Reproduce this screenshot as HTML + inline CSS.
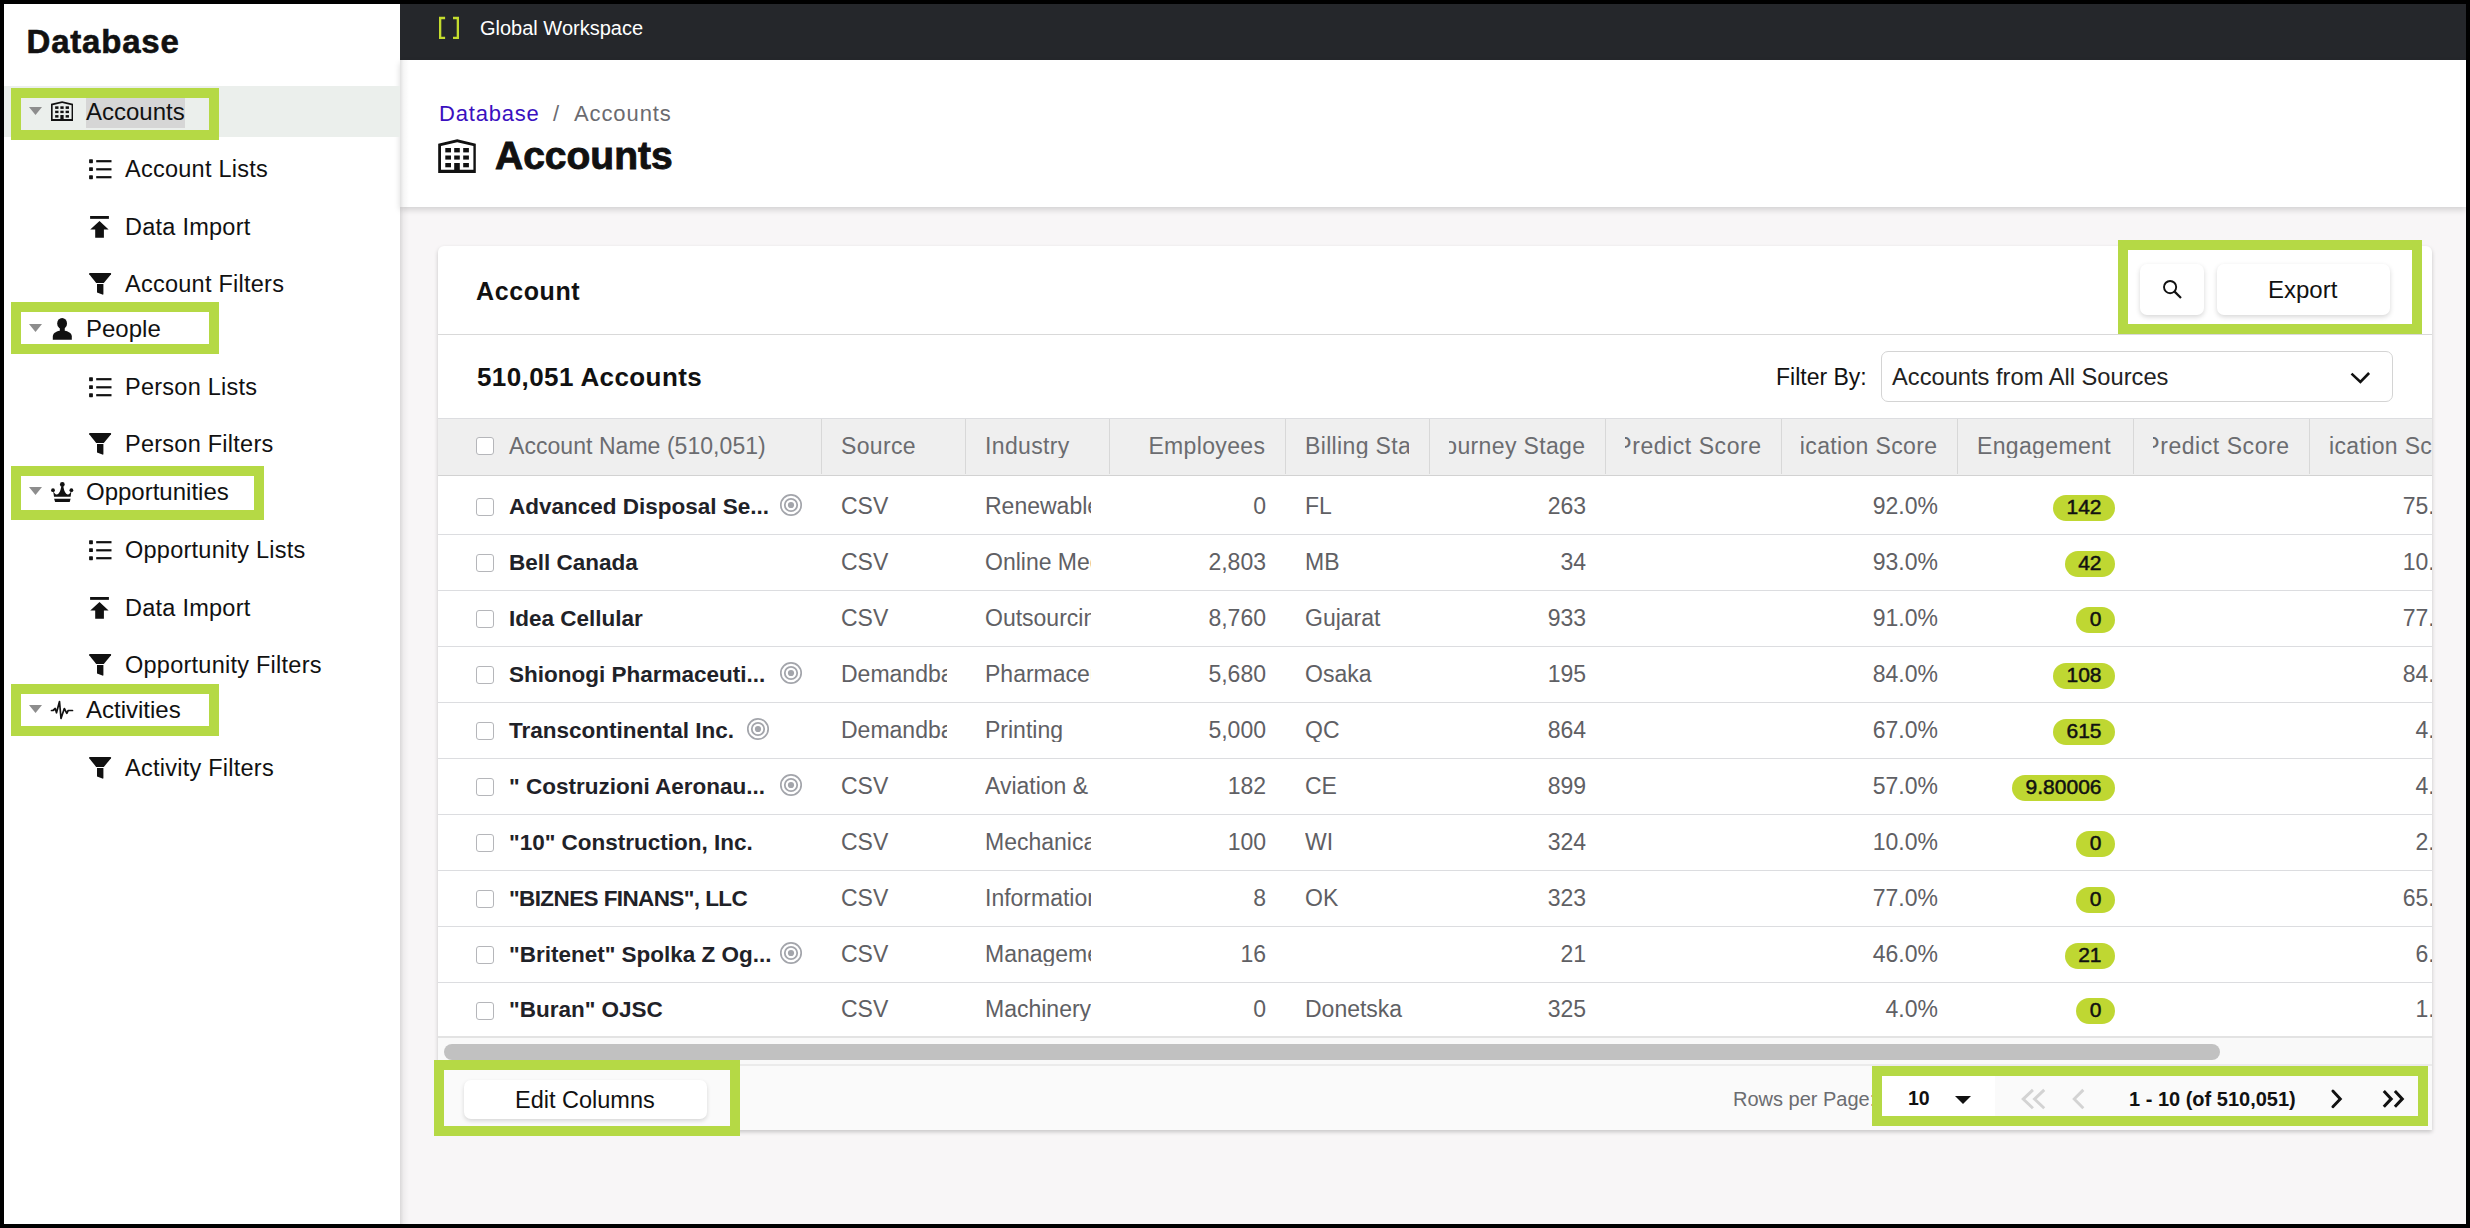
<!DOCTYPE html>
<html><head><meta charset="utf-8">
<style>
*{box-sizing:border-box;margin:0;padding:0}
html,body{width:2470px;height:1228px;overflow:hidden;background:#000;font-family:'Liberation Sans',sans-serif;color:#111}
.a{position:absolute}
.t{position:absolute;white-space:nowrap;line-height:1}
.g{border:10px solid #b5d945;z-index:50}
svg.a{overflow:visible}
</style></head><body>
<div class="a" style="left:4px;top:4px;width:2462px;height:1220px;background:#f8f6f7"></div>
<div class="a" style="left:4px;top:4px;width:396px;height:1220px;background:#fff"></div>
<div class="a" style="left:400px;top:4px;width:2066px;height:56px;background:#25272b"></div>
<div class="a" style="left:400px;top:60px;width:2066px;height:147px;background:#fff;box-shadow:0 3px 6px rgba(0,0,0,.15)"></div>
<div class="a" style="left:400px;top:60px;width:9px;height:1164px;background:linear-gradient(to right,rgba(0,0,0,.12),rgba(0,0,0,.04) 40%,rgba(0,0,0,0))"></div>
<div class="t" style="left:26.5px;top:24.75px;font-size:33px;font-weight:bold;letter-spacing:0.8px;color:#111;-webkit-text-stroke:0.6px #111">Database</div>
<div class="a" style="left:4px;top:86px;width:396px;height:51px;background:#ebefec"></div>
<svg class="a" style="left:29px;top:107px;" width="13" height="8" viewBox="0 0 13 8"><path d="M0 0 H13 L6.5 8 Z" fill="#8d8d8d"/></svg>
<svg class="a" style="left:51px;top:101px;" width="22" height="20" viewBox="0 0 37.6 34"><path fill="#111" fill-rule="evenodd" d="M0 4.7 L19 0.3 L37.6 4.7 V33.9 H0 Z M2.8 7 L19 3.2 L35.2 7 V30.8 H21.6 V24 H16 V30.8 H2.8 Z"/><g fill="#111"><rect x="7.1" y="9" width="5.7" height="4.4"/><rect x="16" y="9" width="5.6" height="4.4"/><rect x="25" y="9" width="5.7" height="4.4"/><rect x="7.1" y="16.5" width="5.7" height="4.1"/><rect x="16" y="16.5" width="5.6" height="4.1"/><rect x="25" y="16.5" width="5.7" height="4.1"/><rect x="7.1" y="24" width="5.7" height="4.3"/><rect x="25" y="24" width="5.7" height="4.3"/></g></svg>
<div class="a" style="left:86px;top:98px;width:99px;height:30px;background:#d6d6d6"></div>
<div class="t" style="left:86px;top:99.60px;font-size:24px;color:#111">Accounts</div>
<svg class="a" style="left:84px;top:154px;" width="32" height="30" viewBox="0 0 32 30"><g fill="#111"><rect x="5.1" y="5.3" width="3.8" height="3.9" rx=".6"/><rect x="5.1" y="13.2" width="3.8" height="3.9" rx=".6"/><rect x="5.1" y="21.3" width="3.8" height="3.9" rx=".6"/><rect x="12.2" y="6.1" width="15.3" height="2.2"/><rect x="12.2" y="14.2" width="15.3" height="2.2"/><rect x="12.2" y="22.1" width="15.3" height="2.2"/></g></svg>
<div class="t" style="left:125px;top:157.83px;font-size:23.5px;color:#111;letter-spacing:0.25px">Account Lists</div>
<svg class="a" style="left:84px;top:210px;" width="32" height="32" viewBox="0 0 32 32"><g fill="#111"><rect x="6.1" y="6" width="18.8" height="2.85"/><path d="M15.5 11.07 L24.6 19.5 H19.9 V27.7 H11.2 V19.5 H6.25 Z"/></g></svg>
<div class="t" style="left:125px;top:215.83px;font-size:23.5px;color:#111;letter-spacing:0.25px">Data Import</div>
<svg class="a" style="left:84px;top:268px;" width="32" height="32" viewBox="0 0 32 32"><g fill="#111"><path d="M6 5.08 H26.4 Q27.6 5.08 27 6.2 L19.8 15 H12.2 L5.2 6.2 Q4.6 5.08 6 5.08 Z"/><path d="M13 16 H19.4 V26 Q19.4 27 18.4 26.6 L13 24.5 Z"/></g></svg>
<div class="t" style="left:125px;top:272.82px;font-size:23.5px;color:#111;letter-spacing:0.25px">Account Filters</div>
<svg class="a" style="left:29px;top:324px;" width="13" height="8" viewBox="0 0 13 8"><path d="M0 0 H13 L6.5 8 Z" fill="#8d8d8d"/></svg>
<svg class="a" style="left:46px;top:312px;" width="32" height="32" viewBox="0 0 32 32"><g fill="#111"><ellipse cx="16.1" cy="11.4" rx="4.9" ry="5.5"/><rect x="13.8" y="15" width="4.95" height="5"/><path d="M6.8 27.7 V24.5 C6.8 21.5 9.5 19.6 13.8 18.75 H18.75 C23 19.6 25.8 21.5 25.8 24.5 V27.7 Z"/></g></svg>
<div class="t" style="left:86px;top:316.60px;font-size:24px;color:#111">People</div>
<svg class="a" style="left:84px;top:372px;" width="32" height="30" viewBox="0 0 32 30"><g fill="#111"><rect x="5.1" y="5.3" width="3.8" height="3.9" rx=".6"/><rect x="5.1" y="13.2" width="3.8" height="3.9" rx=".6"/><rect x="5.1" y="21.3" width="3.8" height="3.9" rx=".6"/><rect x="12.2" y="6.1" width="15.3" height="2.2"/><rect x="12.2" y="14.2" width="15.3" height="2.2"/><rect x="12.2" y="22.1" width="15.3" height="2.2"/></g></svg>
<div class="t" style="left:125px;top:375.82px;font-size:23.5px;color:#111;letter-spacing:0.25px">Person Lists</div>
<svg class="a" style="left:84px;top:428px;" width="32" height="32" viewBox="0 0 32 32"><g fill="#111"><path d="M6 5.08 H26.4 Q27.6 5.08 27 6.2 L19.8 15 H12.2 L5.2 6.2 Q4.6 5.08 6 5.08 Z"/><path d="M13 16 H19.4 V26 Q19.4 27 18.4 26.6 L13 24.5 Z"/></g></svg>
<div class="t" style="left:125px;top:432.82px;font-size:23.5px;color:#111;letter-spacing:0.25px">Person Filters</div>
<svg class="a" style="left:29px;top:487px;" width="13" height="8" viewBox="0 0 13 8"><path d="M0 0 H13 L6.5 8 Z" fill="#8d8d8d"/></svg>
<svg class="a" style="left:46px;top:476px;" width="32" height="32" viewBox="0 0 32 32"><g fill="#111"><circle cx="16.3" cy="8.4" r="2.4"/><circle cx="7" cy="14.2" r="1.9"/><circle cx="25.4" cy="14.2" r="1.9"/><path d="M7 14 L8 20.8 H24.6 L25.6 14 Q24 18.6 21.6 18.4 Q18.6 18 17.2 10 H15.4 Q14 18 11 18.4 Q8.4 18.6 7 14 Z"/><path d="M8.1 22.7 H24.6 L23.7 26 H9.1 Z"/></g></svg>
<div class="t" style="left:86px;top:479.60px;font-size:24px;color:#111">Opportunities</div>
<svg class="a" style="left:84px;top:535px;" width="32" height="30" viewBox="0 0 32 30"><g fill="#111"><rect x="5.1" y="5.3" width="3.8" height="3.9" rx=".6"/><rect x="5.1" y="13.2" width="3.8" height="3.9" rx=".6"/><rect x="5.1" y="21.3" width="3.8" height="3.9" rx=".6"/><rect x="12.2" y="6.1" width="15.3" height="2.2"/><rect x="12.2" y="14.2" width="15.3" height="2.2"/><rect x="12.2" y="22.1" width="15.3" height="2.2"/></g></svg>
<div class="t" style="left:125px;top:538.82px;font-size:23.5px;color:#111;letter-spacing:0.25px">Opportunity Lists</div>
<svg class="a" style="left:84px;top:591px;" width="32" height="32" viewBox="0 0 32 32"><g fill="#111"><rect x="6.1" y="6" width="18.8" height="2.85"/><path d="M15.5 11.07 L24.6 19.5 H19.9 V27.7 H11.2 V19.5 H6.25 Z"/></g></svg>
<div class="t" style="left:125px;top:596.82px;font-size:23.5px;color:#111;letter-spacing:0.25px">Data Import</div>
<svg class="a" style="left:84px;top:649px;" width="32" height="32" viewBox="0 0 32 32"><g fill="#111"><path d="M6 5.08 H26.4 Q27.6 5.08 27 6.2 L19.8 15 H12.2 L5.2 6.2 Q4.6 5.08 6 5.08 Z"/><path d="M13 16 H19.4 V26 Q19.4 27 18.4 26.6 L13 24.5 Z"/></g></svg>
<div class="t" style="left:125px;top:653.82px;font-size:23.5px;color:#111;letter-spacing:0.25px">Opportunity Filters</div>
<svg class="a" style="left:29px;top:705px;" width="13" height="8" viewBox="0 0 13 8"><path d="M0 0 H13 L6.5 8 Z" fill="#8d8d8d"/></svg>
<svg class="a" style="left:46px;top:694px;" width="32" height="32" viewBox="0 0 32 32"><polyline fill="none" stroke="#111" stroke-width="1.7" stroke-linejoin="round" stroke-linecap="round" points="5.5,16.5 7,16.5 9.2,14.5 10.5,18.8 13.5,7.5 15,24.5 18.3,14.5 20.8,19.3 22.2,16.5 26.5,16.5"/></svg>
<div class="t" style="left:86px;top:697.60px;font-size:24px;color:#111">Activities</div>
<svg class="a" style="left:84px;top:752px;" width="32" height="32" viewBox="0 0 32 32"><g fill="#111"><path d="M6 5.08 H26.4 Q27.6 5.08 27 6.2 L19.8 15 H12.2 L5.2 6.2 Q4.6 5.08 6 5.08 Z"/><path d="M13 16 H19.4 V26 Q19.4 27 18.4 26.6 L13 24.5 Z"/></g></svg>
<div class="t" style="left:125px;top:756.82px;font-size:23.5px;color:#111;letter-spacing:0.25px">Activity Filters</div>
<div class="a g" style="left:11px;top:88px;width:208px;height:52px"></div>
<div class="a g" style="left:11px;top:302px;width:208px;height:52px"></div>
<div class="a g" style="left:11px;top:466px;width:253px;height:54px"></div>
<div class="a g" style="left:11px;top:684px;width:208px;height:52px"></div>
<svg class="a" style="left:430px;top:10px;" width="40" height="35" viewBox="0 0 40 35"><g fill="none" stroke="#c4dc2e" stroke-width="2.3"><polyline points="15.1,8 10.15,8 10.15,27.9 15.1,27.9"/><polyline points="23,8 27.85,8 27.85,27.9 23,27.9"/></g></svg>
<div class="t" style="left:480px;top:18.00px;font-size:20px;color:#fff">Global Workspace</div>
<div class="t" style="left:439px;top:103.30px;font-size:22px;color:#3a10c0;letter-spacing:0.8px">Database</div>
<div class="t" style="left:553px;top:103.30px;font-size:22px;color:#6b6b70">/</div>
<div class="t" style="left:574px;top:103.30px;font-size:22px;color:#6b6b70;letter-spacing:0.9px">Accounts</div>
<svg class="a" style="left:438px;top:139px;" width="38" height="34" viewBox="0 0 37.6 34"><path fill="#111" fill-rule="evenodd" d="M0 4.7 L19 0.3 L37.6 4.7 V33.9 H0 Z M2.8 7 L19 3.2 L35.2 7 V30.8 H21.6 V24 H16 V30.8 H2.8 Z"/><g fill="#111"><rect x="7.1" y="9" width="5.7" height="4.4"/><rect x="16" y="9" width="5.6" height="4.4"/><rect x="25" y="9" width="5.7" height="4.4"/><rect x="7.1" y="16.5" width="5.7" height="4.1"/><rect x="16" y="16.5" width="5.6" height="4.1"/><rect x="25" y="16.5" width="5.7" height="4.1"/><rect x="7.1" y="24" width="5.7" height="4.3"/><rect x="25" y="24" width="5.7" height="4.3"/></g></svg>
<div class="t" style="left:495px;top:136.25px;font-size:39px;font-weight:bold;color:#111;-webkit-text-stroke:0.9px #111">Accounts</div>
<div class="a" style="left:438px;top:246px;width:1994px;height:884px;background:#fff;border-radius:6px 6px 0 0;box-shadow:0 2px 4px rgba(0,0,0,.2)"></div>
<div class="t" style="left:476px;top:278.75px;font-size:25px;font-weight:bold;color:#111;letter-spacing:0.6px">Account</div>
<div class="a" style="left:438px;top:334px;width:1994px;height:1px;background:#d9d9d9"></div>
<div class="a" style="left:2140px;top:264px;width:64px;height:51px;background:#fff;border-radius:7px;box-shadow:0 2px 5px rgba(0,0,0,.16)"></div>
<svg class="a" style="left:2156px;top:272px;" width="32" height="32" viewBox="0 0 32 32"><circle cx="14.1" cy="15.1" r="6.1" fill="none" stroke="#111" stroke-width="1.9"/><line x1="18.6" y1="19.6" x2="25" y2="26" stroke="#111" stroke-width="2.2"/></svg>
<div class="a" style="left:2217px;top:264px;width:173px;height:51px;background:#fff;border-radius:7px;box-shadow:0 2px 5px rgba(0,0,0,.16)"></div>
<div class="t" style="left:2268px;top:277.60px;font-size:24px;color:#111">Export</div>
<div class="a g" style="left:2118px;top:240px;width:304px;height:94px"></div>
<div class="t" style="left:477px;top:363.90px;font-size:26px;font-weight:bold;color:#111;letter-spacing:0.4px">510,051 Accounts</div>
<div class="t" style="left:1776px;top:366.45px;font-size:23px;color:#111">Filter By:</div>
<div class="a" style="left:1881px;top:351px;width:512px;height:51px;background:#fff;border:1.5px solid #d4d4d4;border-radius:7px"></div>
<div class="t" style="left:1892px;top:365.86px;font-size:23.7px;color:#222">Accounts from All Sources</div>
<svg class="a" style="left:2346px;top:366px;" width="28" height="22" viewBox="0 0 28 22"><polyline points="5.5,7.6 14.4,15.9 23.1,7" fill="none" stroke="#111" stroke-width="2.6"/></svg>
<div class="a" style="left:438px;top:418px;width:1994px;height:58px;background:#efefef;border-top:1px solid #dcdde0;border-bottom:1px solid #d2d2d2"></div>
<div class="a" style="left:821px;top:419px;width:1px;height:55px;background:#d8d8d8"></div>
<div class="a" style="left:965px;top:419px;width:1px;height:55px;background:#d8d8d8"></div>
<div class="a" style="left:1109px;top:419px;width:1px;height:55px;background:#d8d8d8"></div>
<div class="a" style="left:1285px;top:419px;width:1px;height:55px;background:#d8d8d8"></div>
<div class="a" style="left:1429px;top:419px;width:1px;height:55px;background:#d8d8d8"></div>
<div class="a" style="left:1605px;top:419px;width:1px;height:55px;background:#d8d8d8"></div>
<div class="a" style="left:1781px;top:419px;width:1px;height:55px;background:#d8d8d8"></div>
<div class="a" style="left:1957px;top:419px;width:1px;height:55px;background:#d8d8d8"></div>
<div class="a" style="left:2133px;top:419px;width:1px;height:55px;background:#d8d8d8"></div>
<div class="a" style="left:2309px;top:419px;width:1px;height:55px;background:#d8d8d8"></div>
<div class="a" style="left:476px;top:437px;width:18px;height:18px;background:#fff;border:1.5px solid #b5b6ba;border-radius:3px"></div>
<div class="t" style="left:509px;top:434.65px;font-size:23px;color:#6b6c70;letter-spacing:0.05px">Account Name (510,051)</div>
<div class="t" style="left:841px;top:434.65px;font-size:23px;width:104px;overflow:hidden;color:#6b6c70;letter-spacing:0.35px">Source</div>
<div class="t" style="left:985px;top:434.65px;font-size:23px;width:104px;overflow:hidden;color:#6b6c70;letter-spacing:0.35px">Industry</div>
<div class="a" style="left:1129px;top:434.65px;width:136px;height:26px;overflow:hidden;display:flex;justify-content:flex-end"><span style="font-size:23px;line-height:1;white-space:nowrap;color:#6b6c70;flex:none;letter-spacing:0.35px;margin-right:-0.35px">Employees</span></div>
<div class="t" style="left:1305px;top:434.65px;font-size:23px;width:104px;overflow:hidden;color:#6b6c70;letter-spacing:0.35px">Billing State</div>
<div class="a" style="left:1449px;top:434.65px;width:136px;height:26px;overflow:hidden;display:flex;justify-content:flex-end"><span style="font-size:23px;line-height:1;white-space:nowrap;color:#6b6c70;flex:none;letter-spacing:0.35px;margin-right:-0.35px">Journey Stage</span></div>
<div class="a" style="left:1625px;top:434.65px;width:136px;height:26px;overflow:hidden;display:flex;justify-content:flex-end"><span style="font-size:23px;line-height:1;white-space:nowrap;color:#6b6c70;flex:none;letter-spacing:0.55px;margin-right:-0.55px">Predict Score</span></div>
<div class="a" style="left:1801px;top:434.65px;width:136px;height:26px;overflow:hidden;display:flex;justify-content:flex-end"><span style="font-size:23px;line-height:1;white-space:nowrap;color:#6b6c70;flex:none;letter-spacing:0.35px;margin-right:-0.35px">Qualification Score</span></div>
<div class="t" style="left:1977px;top:434.65px;font-size:23px;width:136px;overflow:hidden;color:#6b6c70;letter-spacing:0.35px">Engagement</div>
<div class="a" style="left:2153px;top:434.65px;width:136px;height:26px;overflow:hidden;display:flex;justify-content:flex-end"><span style="font-size:23px;line-height:1;white-space:nowrap;color:#6b6c70;flex:none;letter-spacing:0.55px;margin-right:-0.55px">Predict Score</span></div>
<div class="a" style="left:2329px;top:434.65px;width:103px;height:26px;overflow:hidden;white-space:nowrap"><span style="font-size:23px;line-height:1;color:#6b6c70;letter-spacing:0.35px">ication Score</span></div>
<div class="a" style="left:438px;top:534px;width:1994px;height:1px;background:#dcdde0"></div>
<div class="a" style="left:476px;top:498px;width:18px;height:18px;background:#fff;border:1.5px solid #b5b6ba;border-radius:3px"></div>
<div class="t" id="nm0" style="left:509px;top:495.88px;font-size:22.5px;font-weight:bold;color:#1f2228;">Advanced Disposal Se...</div>
<div class="t" style="left:841px;top:495.25px;font-size:23px;width:106px;overflow:hidden;color:#5f6064">CSV</div>
<div class="t" style="left:985px;top:495.25px;font-size:23px;width:106px;overflow:hidden;color:#5f6064">Renewable Energy</div>
<div class="t" style="left:1109px;top:495.25px;font-size:23px;width:157px;overflow:hidden;text-align:right;color:#5f6064">0</div>
<div class="t" style="left:1305px;top:495.25px;font-size:23px;width:106px;overflow:hidden;color:#5f6064">FL</div>
<div class="t" style="left:1429px;top:495.25px;font-size:23px;width:157px;overflow:hidden;text-align:right;color:#5f6064">263</div>
<div class="t" style="left:1781px;top:495.25px;font-size:23px;width:157px;overflow:hidden;text-align:right;color:#5f6064">92.0%</div>
<div class="a" style="left:1957px;top:494.5px;width:158px;height:26px;display:flex;justify-content:flex-end"><span style="background:#bfd732;border-radius:13px;height:26px;line-height:23px;padding:0 13.5px;font-size:21px;font-weight:normal;-webkit-text-stroke:0.5px #111;color:#111;white-space:nowrap">142</span></div>
<div class="a" style="left:2309px;top:495.25px;width:123px;height:28px;overflow:hidden"><div style="position:absolute;right:-36px;top:0;font-size:23px;line-height:1;white-space:nowrap;color:#5f6064">75.0%</div></div>
<svg class="a" style="left:779px;top:493.3px;" width="24" height="24" viewBox="0 0 24 24"><g fill="none" stroke="#a3a5ab"><circle cx="12" cy="12" r="10.2" stroke-width="1.7"/><circle cx="12" cy="12" r="6.2" stroke-width="1.8"/></g><circle cx="12" cy="12" r="3.1" fill="#a3a5ab"/></svg>
<div class="a" style="left:438px;top:590px;width:1994px;height:1px;background:#dcdde0"></div>
<div class="a" style="left:476px;top:554px;width:18px;height:18px;background:#fff;border:1.5px solid #b5b6ba;border-radius:3px"></div>
<div class="t" id="nm1" style="left:509px;top:551.88px;font-size:22.5px;font-weight:bold;color:#1f2228;">Bell Canada</div>
<div class="t" style="left:841px;top:551.25px;font-size:23px;width:106px;overflow:hidden;color:#5f6064">CSV</div>
<div class="t" style="left:985px;top:551.25px;font-size:23px;width:106px;overflow:hidden;color:#5f6064">Online Media</div>
<div class="t" style="left:1109px;top:551.25px;font-size:23px;width:157px;overflow:hidden;text-align:right;color:#5f6064">2,803</div>
<div class="t" style="left:1305px;top:551.25px;font-size:23px;width:106px;overflow:hidden;color:#5f6064">MB</div>
<div class="t" style="left:1429px;top:551.25px;font-size:23px;width:157px;overflow:hidden;text-align:right;color:#5f6064">34</div>
<div class="t" style="left:1781px;top:551.25px;font-size:23px;width:157px;overflow:hidden;text-align:right;color:#5f6064">93.0%</div>
<div class="a" style="left:1957px;top:550.5px;width:158px;height:26px;display:flex;justify-content:flex-end"><span style="background:#bfd732;border-radius:13px;height:26px;line-height:23px;padding:0 13.5px;font-size:21px;font-weight:normal;-webkit-text-stroke:0.5px #111;color:#111;white-space:nowrap">42</span></div>
<div class="a" style="left:2309px;top:551.25px;width:123px;height:28px;overflow:hidden"><div style="position:absolute;right:-36px;top:0;font-size:23px;line-height:1;white-space:nowrap;color:#5f6064">10.0%</div></div>
<div class="a" style="left:438px;top:646px;width:1994px;height:1px;background:#dcdde0"></div>
<div class="a" style="left:476px;top:610px;width:18px;height:18px;background:#fff;border:1.5px solid #b5b6ba;border-radius:3px"></div>
<div class="t" id="nm2" style="left:509px;top:607.88px;font-size:22.5px;font-weight:bold;color:#1f2228;">Idea Cellular</div>
<div class="t" style="left:841px;top:607.25px;font-size:23px;width:106px;overflow:hidden;color:#5f6064">CSV</div>
<div class="t" style="left:985px;top:607.25px;font-size:23px;width:106px;overflow:hidden;color:#5f6064">Outsourcing</div>
<div class="t" style="left:1109px;top:607.25px;font-size:23px;width:157px;overflow:hidden;text-align:right;color:#5f6064">8,760</div>
<div class="t" style="left:1305px;top:607.25px;font-size:23px;width:106px;overflow:hidden;color:#5f6064">Gujarat</div>
<div class="t" style="left:1429px;top:607.25px;font-size:23px;width:157px;overflow:hidden;text-align:right;color:#5f6064">933</div>
<div class="t" style="left:1781px;top:607.25px;font-size:23px;width:157px;overflow:hidden;text-align:right;color:#5f6064">91.0%</div>
<div class="a" style="left:1957px;top:606.5px;width:158px;height:26px;display:flex;justify-content:flex-end"><span style="background:#bfd732;border-radius:13px;height:26px;line-height:23px;padding:0 13.5px;font-size:21px;font-weight:normal;-webkit-text-stroke:0.5px #111;color:#111;white-space:nowrap">0</span></div>
<div class="a" style="left:2309px;top:607.25px;width:123px;height:28px;overflow:hidden"><div style="position:absolute;right:-36px;top:0;font-size:23px;line-height:1;white-space:nowrap;color:#5f6064">77.0%</div></div>
<div class="a" style="left:438px;top:702px;width:1994px;height:1px;background:#dcdde0"></div>
<div class="a" style="left:476px;top:666px;width:18px;height:18px;background:#fff;border:1.5px solid #b5b6ba;border-radius:3px"></div>
<div class="t" id="nm3" style="left:509px;top:663.88px;font-size:22.5px;font-weight:bold;color:#1f2228;">Shionogi Pharmaceuti...</div>
<div class="t" style="left:841px;top:663.25px;font-size:23px;width:106px;overflow:hidden;color:#5f6064">Demandbase</div>
<div class="t" style="left:985px;top:663.25px;font-size:23px;width:106px;overflow:hidden;color:#5f6064">Pharmaceuticals</div>
<div class="t" style="left:1109px;top:663.25px;font-size:23px;width:157px;overflow:hidden;text-align:right;color:#5f6064">5,680</div>
<div class="t" style="left:1305px;top:663.25px;font-size:23px;width:106px;overflow:hidden;color:#5f6064">Osaka</div>
<div class="t" style="left:1429px;top:663.25px;font-size:23px;width:157px;overflow:hidden;text-align:right;color:#5f6064">195</div>
<div class="t" style="left:1781px;top:663.25px;font-size:23px;width:157px;overflow:hidden;text-align:right;color:#5f6064">84.0%</div>
<div class="a" style="left:1957px;top:662.5px;width:158px;height:26px;display:flex;justify-content:flex-end"><span style="background:#bfd732;border-radius:13px;height:26px;line-height:23px;padding:0 13.5px;font-size:21px;font-weight:normal;-webkit-text-stroke:0.5px #111;color:#111;white-space:nowrap">108</span></div>
<div class="a" style="left:2309px;top:663.25px;width:123px;height:28px;overflow:hidden"><div style="position:absolute;right:-36px;top:0;font-size:23px;line-height:1;white-space:nowrap;color:#5f6064">84.0%</div></div>
<svg class="a" style="left:779px;top:661.3px;" width="24" height="24" viewBox="0 0 24 24"><g fill="none" stroke="#a3a5ab"><circle cx="12" cy="12" r="10.2" stroke-width="1.7"/><circle cx="12" cy="12" r="6.2" stroke-width="1.8"/></g><circle cx="12" cy="12" r="3.1" fill="#a3a5ab"/></svg>
<div class="a" style="left:438px;top:758px;width:1994px;height:1px;background:#dcdde0"></div>
<div class="a" style="left:476px;top:722px;width:18px;height:18px;background:#fff;border:1.5px solid #b5b6ba;border-radius:3px"></div>
<div class="t" id="nm4" style="left:509px;top:719.88px;font-size:22.5px;font-weight:bold;color:#1f2228;">Transcontinental Inc.</div>
<div class="t" style="left:841px;top:719.25px;font-size:23px;width:106px;overflow:hidden;color:#5f6064">Demandbase</div>
<div class="t" style="left:985px;top:719.25px;font-size:23px;width:106px;overflow:hidden;color:#5f6064">Printing</div>
<div class="t" style="left:1109px;top:719.25px;font-size:23px;width:157px;overflow:hidden;text-align:right;color:#5f6064">5,000</div>
<div class="t" style="left:1305px;top:719.25px;font-size:23px;width:106px;overflow:hidden;color:#5f6064">QC</div>
<div class="t" style="left:1429px;top:719.25px;font-size:23px;width:157px;overflow:hidden;text-align:right;color:#5f6064">864</div>
<div class="t" style="left:1781px;top:719.25px;font-size:23px;width:157px;overflow:hidden;text-align:right;color:#5f6064">67.0%</div>
<div class="a" style="left:1957px;top:718.5px;width:158px;height:26px;display:flex;justify-content:flex-end"><span style="background:#bfd732;border-radius:13px;height:26px;line-height:23px;padding:0 13.5px;font-size:21px;font-weight:normal;-webkit-text-stroke:0.5px #111;color:#111;white-space:nowrap">615</span></div>
<div class="a" style="left:2309px;top:719.25px;width:123px;height:28px;overflow:hidden"><div style="position:absolute;right:-36px;top:0;font-size:23px;line-height:1;white-space:nowrap;color:#5f6064">4.0%</div></div>
<svg class="a" style="left:746px;top:717.3px;" width="24" height="24" viewBox="0 0 24 24"><g fill="none" stroke="#a3a5ab"><circle cx="12" cy="12" r="10.2" stroke-width="1.7"/><circle cx="12" cy="12" r="6.2" stroke-width="1.8"/></g><circle cx="12" cy="12" r="3.1" fill="#a3a5ab"/></svg>
<div class="a" style="left:438px;top:814px;width:1994px;height:1px;background:#dcdde0"></div>
<div class="a" style="left:476px;top:778px;width:18px;height:18px;background:#fff;border:1.5px solid #b5b6ba;border-radius:3px"></div>
<div class="t" id="nm5" style="left:509px;top:775.88px;font-size:22.5px;font-weight:bold;color:#1f2228;">" Costruzioni Aeronau...</div>
<div class="t" style="left:841px;top:775.25px;font-size:23px;width:106px;overflow:hidden;color:#5f6064">CSV</div>
<div class="t" style="left:985px;top:775.25px;font-size:23px;width:106px;overflow:hidden;color:#5f6064">Aviation &amp; Aerospace</div>
<div class="t" style="left:1109px;top:775.25px;font-size:23px;width:157px;overflow:hidden;text-align:right;color:#5f6064">182</div>
<div class="t" style="left:1305px;top:775.25px;font-size:23px;width:106px;overflow:hidden;color:#5f6064">CE</div>
<div class="t" style="left:1429px;top:775.25px;font-size:23px;width:157px;overflow:hidden;text-align:right;color:#5f6064">899</div>
<div class="t" style="left:1781px;top:775.25px;font-size:23px;width:157px;overflow:hidden;text-align:right;color:#5f6064">57.0%</div>
<div class="a" style="left:1957px;top:774.5px;width:158px;height:26px;display:flex;justify-content:flex-end"><span style="background:#bfd732;border-radius:13px;height:26px;line-height:23px;padding:0 13.5px;font-size:21px;font-weight:normal;-webkit-text-stroke:0.5px #111;color:#111;white-space:nowrap">9.80006</span></div>
<div class="a" style="left:2309px;top:775.25px;width:123px;height:28px;overflow:hidden"><div style="position:absolute;right:-36px;top:0;font-size:23px;line-height:1;white-space:nowrap;color:#5f6064">4.0%</div></div>
<svg class="a" style="left:779px;top:773.3px;" width="24" height="24" viewBox="0 0 24 24"><g fill="none" stroke="#a3a5ab"><circle cx="12" cy="12" r="10.2" stroke-width="1.7"/><circle cx="12" cy="12" r="6.2" stroke-width="1.8"/></g><circle cx="12" cy="12" r="3.1" fill="#a3a5ab"/></svg>
<div class="a" style="left:438px;top:870px;width:1994px;height:1px;background:#dcdde0"></div>
<div class="a" style="left:476px;top:834px;width:18px;height:18px;background:#fff;border:1.5px solid #b5b6ba;border-radius:3px"></div>
<div class="t" id="nm6" style="left:509px;top:831.88px;font-size:22.5px;font-weight:bold;color:#1f2228;">"10" Construction, Inc.</div>
<div class="t" style="left:841px;top:831.25px;font-size:23px;width:106px;overflow:hidden;color:#5f6064">CSV</div>
<div class="t" style="left:985px;top:831.25px;font-size:23px;width:106px;overflow:hidden;color:#5f6064">Mechanical</div>
<div class="t" style="left:1109px;top:831.25px;font-size:23px;width:157px;overflow:hidden;text-align:right;color:#5f6064">100</div>
<div class="t" style="left:1305px;top:831.25px;font-size:23px;width:106px;overflow:hidden;color:#5f6064">WI</div>
<div class="t" style="left:1429px;top:831.25px;font-size:23px;width:157px;overflow:hidden;text-align:right;color:#5f6064">324</div>
<div class="t" style="left:1781px;top:831.25px;font-size:23px;width:157px;overflow:hidden;text-align:right;color:#5f6064">10.0%</div>
<div class="a" style="left:1957px;top:830.5px;width:158px;height:26px;display:flex;justify-content:flex-end"><span style="background:#bfd732;border-radius:13px;height:26px;line-height:23px;padding:0 13.5px;font-size:21px;font-weight:normal;-webkit-text-stroke:0.5px #111;color:#111;white-space:nowrap">0</span></div>
<div class="a" style="left:2309px;top:831.25px;width:123px;height:28px;overflow:hidden"><div style="position:absolute;right:-36px;top:0;font-size:23px;line-height:1;white-space:nowrap;color:#5f6064">2.0%</div></div>
<div class="a" style="left:438px;top:926px;width:1994px;height:1px;background:#dcdde0"></div>
<div class="a" style="left:476px;top:890px;width:18px;height:18px;background:#fff;border:1.5px solid #b5b6ba;border-radius:3px"></div>
<div class="t" id="nm7" style="left:509px;top:887.88px;font-size:22.5px;font-weight:bold;color:#1f2228;letter-spacing:-0.6px;">"BIZNES FINANS", LLC</div>
<div class="t" style="left:841px;top:887.25px;font-size:23px;width:106px;overflow:hidden;color:#5f6064">CSV</div>
<div class="t" style="left:985px;top:887.25px;font-size:23px;width:106px;overflow:hidden;color:#5f6064">Information</div>
<div class="t" style="left:1109px;top:887.25px;font-size:23px;width:157px;overflow:hidden;text-align:right;color:#5f6064">8</div>
<div class="t" style="left:1305px;top:887.25px;font-size:23px;width:106px;overflow:hidden;color:#5f6064">OK</div>
<div class="t" style="left:1429px;top:887.25px;font-size:23px;width:157px;overflow:hidden;text-align:right;color:#5f6064">323</div>
<div class="t" style="left:1781px;top:887.25px;font-size:23px;width:157px;overflow:hidden;text-align:right;color:#5f6064">77.0%</div>
<div class="a" style="left:1957px;top:886.5px;width:158px;height:26px;display:flex;justify-content:flex-end"><span style="background:#bfd732;border-radius:13px;height:26px;line-height:23px;padding:0 13.5px;font-size:21px;font-weight:normal;-webkit-text-stroke:0.5px #111;color:#111;white-space:nowrap">0</span></div>
<div class="a" style="left:2309px;top:887.25px;width:123px;height:28px;overflow:hidden"><div style="position:absolute;right:-36px;top:0;font-size:23px;line-height:1;white-space:nowrap;color:#5f6064">65.0%</div></div>
<div class="a" style="left:438px;top:982px;width:1994px;height:1px;background:#dcdde0"></div>
<div class="a" style="left:476px;top:946px;width:18px;height:18px;background:#fff;border:1.5px solid #b5b6ba;border-radius:3px"></div>
<div class="t" id="nm8" style="left:509px;top:943.88px;font-size:22.5px;font-weight:bold;color:#1f2228;">"Britenet" Spolka Z Og...</div>
<div class="t" style="left:841px;top:943.25px;font-size:23px;width:106px;overflow:hidden;color:#5f6064">CSV</div>
<div class="t" style="left:985px;top:943.25px;font-size:23px;width:106px;overflow:hidden;color:#5f6064">Management</div>
<div class="t" style="left:1109px;top:943.25px;font-size:23px;width:157px;overflow:hidden;text-align:right;color:#5f6064">16</div>
<div class="t" style="left:1305px;top:943.25px;font-size:23px;width:106px;overflow:hidden;color:#5f6064"></div>
<div class="t" style="left:1429px;top:943.25px;font-size:23px;width:157px;overflow:hidden;text-align:right;color:#5f6064">21</div>
<div class="t" style="left:1781px;top:943.25px;font-size:23px;width:157px;overflow:hidden;text-align:right;color:#5f6064">46.0%</div>
<div class="a" style="left:1957px;top:942.5px;width:158px;height:26px;display:flex;justify-content:flex-end"><span style="background:#bfd732;border-radius:13px;height:26px;line-height:23px;padding:0 13.5px;font-size:21px;font-weight:normal;-webkit-text-stroke:0.5px #111;color:#111;white-space:nowrap">21</span></div>
<div class="a" style="left:2309px;top:943.25px;width:123px;height:28px;overflow:hidden"><div style="position:absolute;right:-36px;top:0;font-size:23px;line-height:1;white-space:nowrap;color:#5f6064">6.0%</div></div>
<svg class="a" style="left:779px;top:941.3px;" width="24" height="24" viewBox="0 0 24 24"><g fill="none" stroke="#a3a5ab"><circle cx="12" cy="12" r="10.2" stroke-width="1.7"/><circle cx="12" cy="12" r="6.2" stroke-width="1.8"/></g><circle cx="12" cy="12" r="3.1" fill="#a3a5ab"/></svg>
<div class="a" style="left:438px;top:1036px;width:1994px;height:2px;background:#e3e3e3"></div>
<div class="a" style="left:476px;top:1002px;width:18px;height:18px;background:#fff;border:1.5px solid #b5b6ba;border-radius:3px"></div>
<div class="t" id="nm9" style="left:509px;top:998.88px;font-size:22.5px;font-weight:bold;color:#1f2228;">"Buran" OJSC</div>
<div class="t" style="left:841px;top:998.25px;font-size:23px;width:106px;overflow:hidden;color:#5f6064">CSV</div>
<div class="t" style="left:985px;top:998.25px;font-size:23px;width:106px;overflow:hidden;color:#5f6064">Machinery</div>
<div class="t" style="left:1109px;top:998.25px;font-size:23px;width:157px;overflow:hidden;text-align:right;color:#5f6064">0</div>
<div class="t" style="left:1305px;top:998.25px;font-size:23px;width:106px;overflow:hidden;color:#5f6064">Donetska</div>
<div class="t" style="left:1429px;top:998.25px;font-size:23px;width:157px;overflow:hidden;text-align:right;color:#5f6064">325</div>
<div class="t" style="left:1781px;top:998.25px;font-size:23px;width:157px;overflow:hidden;text-align:right;color:#5f6064">4.0%</div>
<div class="a" style="left:1957px;top:997.5px;width:158px;height:26px;display:flex;justify-content:flex-end"><span style="background:#bfd732;border-radius:13px;height:26px;line-height:23px;padding:0 13.5px;font-size:21px;font-weight:normal;-webkit-text-stroke:0.5px #111;color:#111;white-space:nowrap">0</span></div>
<div class="a" style="left:2309px;top:998.25px;width:123px;height:28px;overflow:hidden"><div style="position:absolute;right:-36px;top:0;font-size:23px;line-height:1;white-space:nowrap;color:#5f6064">1.0%</div></div>
<div class="a" style="left:438px;top:1038px;width:1994px;height:28px;background:#f9f9f9"></div>
<div class="a" style="left:444px;top:1044px;width:1776px;height:16px;background:#c1c1c1;border-radius:8px"></div>
<div class="a" style="left:438px;top:1064px;width:1994px;height:66px;background:#fafafa;border-top:2px solid #ebebeb"></div>
<div class="a" style="left:464px;top:1080px;width:243px;height:39px;background:#fff;border-radius:7px;box-shadow:0 2px 4px rgba(0,0,0,.14)"></div>
<div class="t" style="left:515px;top:1089.03px;font-size:23.5px;color:#111">Edit Columns</div>
<div class="a g" style="left:434px;top:1060px;width:306px;height:76px"></div>
<div class="t" style="left:1733px;top:1089.40px;font-size:20px;color:#6b6c70">Rows per Page:</div>
<div class="a" style="left:1882px;top:1076px;width:113px;height:40px;background:#fff"></div>
<div class="t" style="left:1908px;top:1089.42px;font-size:19.5px;font-weight:bold;color:#111">10</div>
<svg class="a" style="left:1955px;top:1096px;" width="16" height="8" viewBox="0 0 16 8"><path d="M0 0 H16 L8.0 8 Z" fill="#111"/></svg>
<svg class="a" style="left:2010px;top:1080px;z-index:41" width="90" height="36" viewBox="0 0 90 36"><g fill="none" stroke="#d3d3d3" stroke-width="2.9" stroke-linecap="square"><polyline points="21.9,10.9 13.2,19.1 21.9,27.3"/><polyline points="33.2,10.9 24.5,19.1 33.2,27.3"/><polyline points="72.3,10.9 64.2,19.1 72.3,27.3"/></g></svg>
<div class="t" style="left:2129px;top:1089.40px;font-size:20px;font-weight:bold;color:#111">1 - 10 (of 510,051)</div>
<svg class="a" style="left:2320px;top:1080px;z-index:41" width="90" height="36" viewBox="0 0 90 36"><g fill="none" stroke="#111" stroke-width="2.9" stroke-linecap="round"><polyline points="12.9,11.1 20.3,18.9 12.9,26.7"/></g><g fill="none" stroke="#111" stroke-width="3"><polyline points="63.8,11 71.2,18.9 63.8,26.8"/><polyline points="74.9,11 82.3,18.9 74.9,26.8"/></g></svg>
<div class="a g" style="left:1872px;top:1066px;width:556px;height:60px"></div>
</body></html>
